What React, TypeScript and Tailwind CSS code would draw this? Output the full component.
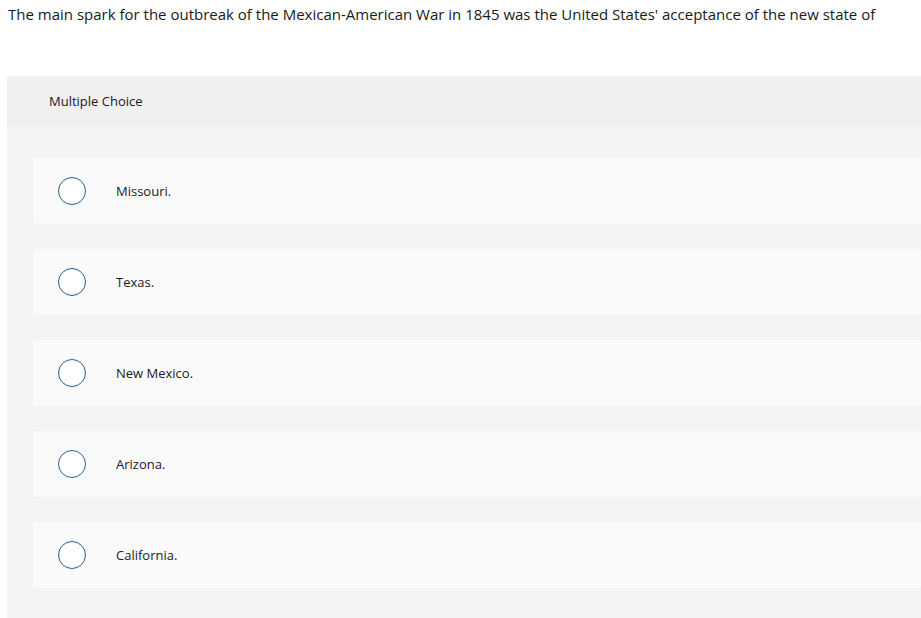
import React from "react";

const options = ["Missouri.", "Texas.", "New Mexico.", "Arizona.", "California."];

export default function App() {
  return (
    <div className="w-[921px] h-[618px] bg-white overflow-hidden" style={{ fontFamily: '"Open Sans", Lato, sans-serif' }}>
      <p className="pl-[8px] pt-[4px] text-[15px] leading-[20px] text-[#1a1a1a] whitespace-nowrap">
        The main spark for the outbreak of the Mexican-American War in 1845 was the United States' acceptance of the new state of
      </p>
      <div className="ml-[7px] mt-[52px] bg-[#f4f4f4]">
        <div className="h-[50px] bg-[#f0f0f0] flex items-center pl-[42px] pt-[2px] text-[13px] text-[#1a1a1a]">
          Multiple Choice
        </div>
        <div className="pl-[26px] pt-[32px] pb-[30px] flex flex-col gap-[25px]">
          {options.map((o) => (
            <div key={o} className="h-[66px] bg-[#fafafa] rounded-[2px] flex items-center pl-[25px]">
              <div className="w-[28px] h-[28px] rounded-full border-[1.5px] border-[#2c5d8f] bg-white" />
              <span className="ml-[30px] pt-[2px] text-[13px] text-[#1a1a1a]">{o}</span>
            </div>
          ))}
        </div>
      </div>
    </div>
  );
}
